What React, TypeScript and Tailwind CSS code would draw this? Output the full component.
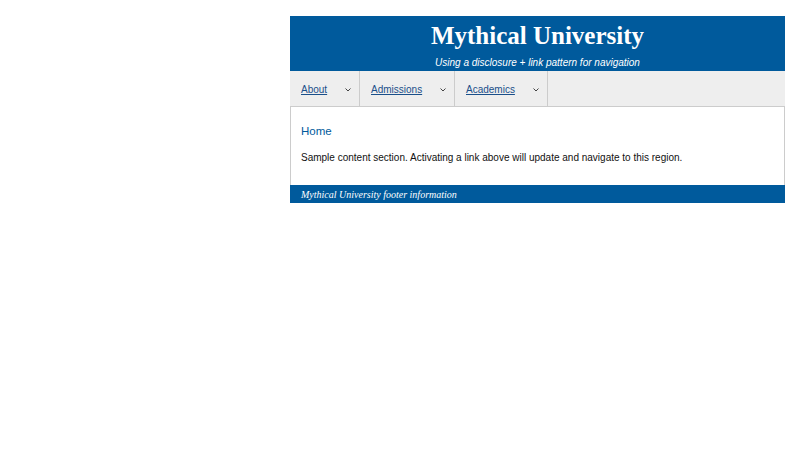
import React from 'react';

const navItems = [
  { label: 'About', width: 'w-[70px]' },
  { label: 'Admissions', width: 'w-[95px]' },
  { label: 'Academics', width: 'w-[93px]' },
];

const Chevron = () => (
  <svg width="10" height="10" viewBox="0 0 10 10" className="mt-[3px] text-[#444]">
    <path d="M2.5 3.5 L5 6 L7.5 3.5" fill="none" stroke="currentColor" strokeWidth="1" />
  </svg>
);

const App = () => {
  return (
    <div className="min-h-[450px] bg-white pl-[290px] pt-4 font-['Liberation_Sans',Arial,sans-serif]">
      <div className="w-[495px]">
        {/* Header */}
        <header className="flex h-[55px] flex-col items-center bg-[#005a9c] text-white">
          <h1 className="mt-[5px] font-['Liberation_Serif',serif] text-[25px] leading-[30px] font-bold">
            Mythical University
          </h1>
          <p className="mt-[5px] text-[10px] leading-[13px] italic">
            Using a disclosure + link pattern for navigation
          </p>
        </header>

        {/* Navigation */}
        <nav className="flex h-[36px] border-b border-[#ccc] bg-[#eee]">
          {navItems.map((item) => (
            <div
              key={item.label}
              className={`flex ${item.width} items-center justify-between border-r border-[#ccc] pr-[6px] pl-[11px]`}
            >
              <a href="#" className="mt-[1px] text-[10px] text-[#1a4f8a] underline">
                {item.label}
              </a>
              <Chevron />
            </div>
          ))}
        </nav>

        {/* Content */}
        <main className="h-[78px] border-x border-[#ccc] px-[10px] pt-[17px]">
          <h2 className="text-[11.5px] leading-[14px] text-[#005a9c]">Home</h2>
          <p className="mt-[13px] text-[10px] leading-[13px] text-[#111]">
            Sample content section. Activating a link above will update and navigate to this region.
          </p>
        </main>

        {/* Footer */}
        <footer className="flex h-[18px] items-center bg-[#005a9c] pl-[11px] font-['Liberation_Serif',serif] text-[10px] text-white italic">
          Mythical University footer information
        </footer>
      </div>
    </div>
  );
};

export default App;
